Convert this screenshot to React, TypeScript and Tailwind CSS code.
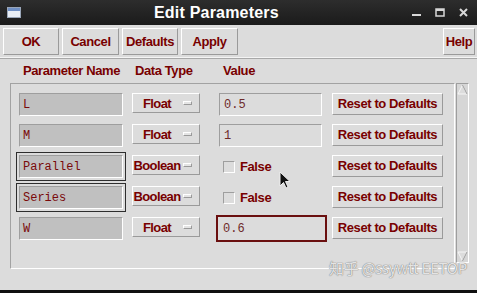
import { ReactNode } from "react";

const raised =
  "border border-t-white border-l-white border-r-[#9a9a9a] border-b-[#9a9a9a] bg-[#dcdcdc]";
const sunken =
  "border border-t-[#9e9e9e] border-l-[#9e9e9e] border-r-white border-b-white";

type Row = {
  name: string;
  type: "Float" | "Boolean";
  value: string;
  outlined?: boolean;
  focused?: boolean;
};

const rows: Row[] = [
  { name: "L", type: "Float", value: "0.5" },
  { name: "M", type: "Float", value: "1" },
  { name: "Parallel", type: "Boolean", value: "False", outlined: true },
  { name: "Series", type: "Boolean", value: "False", outlined: true },
  { name: "W", type: "Float", value: "0.6", focused: true },
];

function ToolButton({ children, w }: { children: ReactNode; w: string }) {
  return (
    <button
      className={`${raised} ${w} h-[27px] flex items-center justify-center text-[13px] font-bold tracking-[-0.4px] text-[#780000]`}
    >
      {children}
    </button>
  );
}

function TypeMenu({ label }: { label: string }) {
  return (
    <div className={`${raised} w-[68px] h-[20px] flex items-center`}>
      <span className="flex-1 text-center text-[13px] font-bold tracking-[-0.6px] text-[#780000] leading-none">
        {label}
      </span>
      <span className="w-[9px] h-[4px] mr-[7px] ml-[2px] border border-t-white border-l-white border-r-[#9a9a9a] border-b-[#9a9a9a] bg-[#e4e4e4]" />
    </div>
  );
}

function ParamRow({ row }: { row: Row }) {
  return (
    <div className="h-[23px] flex items-start">
      <div
        className={`${sunken} w-[104px] h-[23px] bg-[#c0c0c0] pl-[3px] flex items-center font-['Liberation_Mono'] text-[12px] text-[#7a0a0a] ${
          row.outlined ? "outline outline-1 outline-offset-2 outline-[#2e2e2e]" : ""
        }`}
      >
        {row.name}
      </div>
      <div className="ml-[9px]">
        <TypeMenu label={row.type} />
      </div>
      <div className="ml-[19px] w-[103px] h-[23px]">
        {row.type === "Boolean" ? (
          <div className="h-full flex items-center pl-[4px] gap-[5px]">
            <span className={`${sunken} w-[12px] h-[12px] bg-[#dcdcdc]`} />
            <span className="text-[13px] font-bold tracking-[-0.4px] text-[#780000]">
              {row.value}
            </span>
          </div>
        ) : (
          <div
            className={`h-full pl-[4px] flex items-center font-['Liberation_Mono'] text-[12px] text-[#6e2a2a] ${
              row.focused
                ? "outline-2 outline-[#6a0f0f] w-[107px] -ml-[1px] border border-transparent"
                : sunken
            }`}
          >
            {row.value}
          </div>
        )}
      </div>
      <button
        className={`${raised} ml-[10px] w-[111px] h-[22px] flex items-center justify-center text-[13px] font-bold tracking-[-0.4px] text-[#780000]`}
      >
        Reset to Defaults
      </button>
    </div>
  );
}

export default function App() {
  return (
    <div className="w-[477px] h-[293px] bg-[#101010] flex flex-col font-['Liberation_Sans'] overflow-hidden relative">
      {/* title bar */}
      <div className="h-[25px] shrink-0 flex items-center bg-gradient-to-b from-[#2d2d2d] to-[#1b1b1b]">
        <div className="ml-[7px] w-[14px] h-[11px] bg-[#e9eef5] border border-[#9aa6b8] flex flex-col">
          <div className="h-[3px] bg-[#6f8fc4]" />
        </div>
        <span className="ml-[133px] text-[16px] font-bold text-white tracking-[0.2px]">
          Edit Parameters
        </span>
        <div className="ml-auto mr-[9px] flex items-center gap-[14px] text-[#d8d8d8]">
          <svg width="9" height="9" viewBox="0 0 9 9">
            <rect x="0" y="6" width="9" height="2" fill="currentColor" />
          </svg>
          <svg width="10" height="9" viewBox="0 0 10 9">
            <rect x="1" y="1" width="8" height="7" fill="none" stroke="currentColor" strokeWidth="1.5" />
            <rect x="1" y="1" width="8" height="2" fill="currentColor" />
          </svg>
          <svg width="9" height="9" viewBox="0 0 9 9">
            <path d="M1 1 L8 8 M8 1 L1 8" stroke="currentColor" strokeWidth="2" />
          </svg>
        </div>
      </div>

      {/* window body */}
      <div className="h-[265px] shrink-0 bg-[#dcdcdc] flex flex-col">
        <div className="h-[33px] shrink-0 pt-[3px] pl-[3px] pr-[2px] flex gap-[3px] border-b border-b-[#f4f4f4] shadow-[0_1px_0_#a8a8a8]">
          <ToolButton w="w-[56px]">OK</ToolButton>
          <ToolButton w="w-[57px]">Cancel</ToolButton>
          <ToolButton w="w-[56px]">Defaults</ToolButton>
          <ToolButton w="w-[57px]">Apply</ToolButton>
          <div className="ml-auto">
            <ToolButton w="w-[32px]">Help</ToolButton>
          </div>
        </div>

        <div className="h-[25px] shrink-0 flex items-center pl-[23px] text-[13px] font-bold tracking-[-0.4px] text-[#780000]">
          <span className="w-[112px]">Parameter Name</span>
          <span className="w-[88px]">Data Type</span>
          <span>Value</span>
        </div>

        <div className="pl-[10px] flex gap-[1px]">
          <div className="w-[445px] h-[186px] border border-t-[#a2a2a2] border-l-[#a2a2a2] border-r-white border-b-white pt-[9px] pl-[8px] flex flex-col gap-[8px]">
            {rows.map((r) => (
              <ParamRow key={r.name} row={r} />
            ))}
          </div>
          <div className={`${sunken} w-[13px] h-[180px] flex flex-col justify-between bg-[#d6d6d6]`}>
            <svg width="11" height="11" viewBox="0 0 11 11">
              <path d="M5.5 1 L10 10 L1 10 Z" fill="#dcdcdc" stroke="#f6f6f6" strokeWidth="1" />
              <path d="M5.5 1 L10 10" stroke="#9a9a9a" strokeWidth="1" fill="none" />
            </svg>
            <svg width="11" height="11" viewBox="0 0 11 11">
              <path d="M1 1 L10 1 L5.5 10 Z" fill="#dcdcdc" stroke="#f6f6f6" strokeWidth="1" />
              <path d="M10 1 L5.5 10" stroke="#9a9a9a" strokeWidth="1" fill="none" />
            </svg>
          </div>
        </div>
      </div>

      {/* mouse pointer */}
      <svg
        className="absolute left-[279px] top-[171px]"
        width="13"
        height="19"
        viewBox="0 0 13 19"
      >
        <path d="M1 1 L1 15 L4.5 11.5 L7 17 L9 16 L6.5 10.5 L11 10.5 Z" fill="#111" stroke="#eee" strokeWidth="1" />
      </svg>

      {/* watermark */}
      <div className="absolute left-[329px] top-[257px] text-[15px] text-white/80 font-['Noto_Sans_CJK_SC',sans-serif] tracking-[-0.3px] [text-shadow:0_0_1px_#777,0_0_1px_#777]">
        知乎 @ssywtt EETOP
      </div>
    </div>
  );
}
